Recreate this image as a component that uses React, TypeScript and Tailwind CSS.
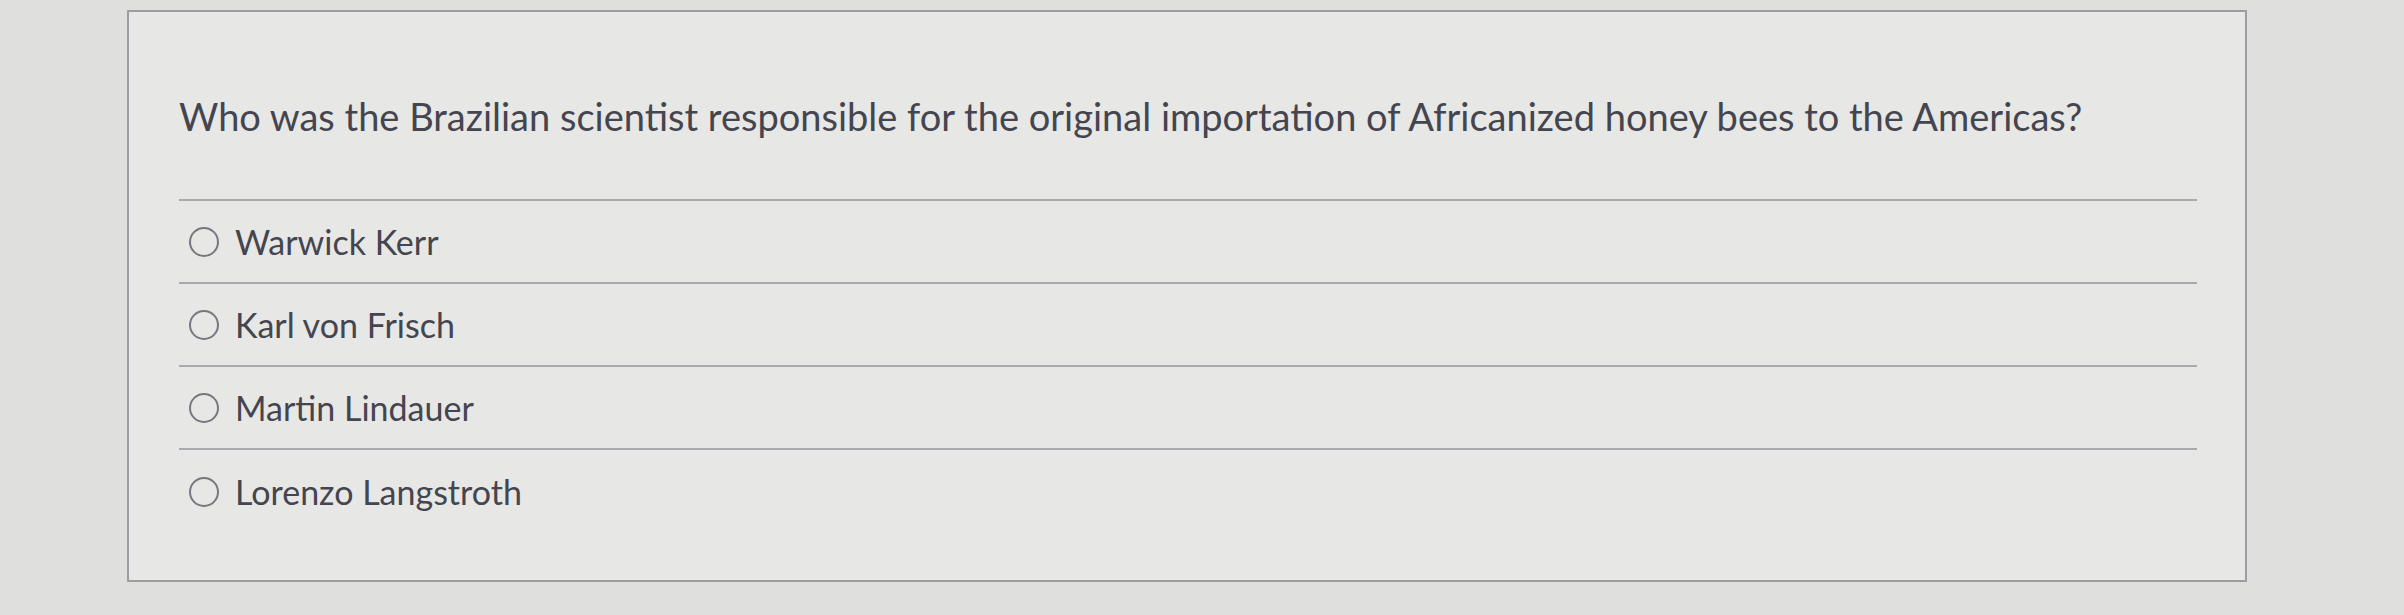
const options = ['Warwick Kerr', 'Karl von Frisch', 'Martin Lindauer', 'Lorenzo Langstroth'];

export default function App() {
  return (
    <div className="h-[615px] w-[2404px] bg-[#dfdfdd] pl-[127px] pt-[10px] font-['Lato',sans-serif] text-[#44454f]">
      <div className="h-[572px] w-[2120px] border-2 border-[#9c9ca2] bg-[#e7e7e5] pl-[50px] pr-[48px] pt-[81px]">
        <p className="text-[38px] leading-[46px]">
          Who was the Brazilian scientist responsible for the original importation of Africanized honey bees to the
          Americas?
        </p>
        <div className="mt-[60px] border-t-2 border-[#a9a9ae]">
          {options.map((opt, i) => (
            <label
              key={opt}
              className={
                i < options.length - 1
                  ? 'flex h-[83px] items-center gap-[16px] border-b-2 border-[#a9a9ae] pl-[10px]'
                  : 'flex h-[83px] items-center gap-[16px] pl-[10px]'
              }
            >
              <span className="h-[30px] w-[30px] rounded-full border-2 border-[#77777f]" />
              <span className="text-[34px] leading-none">{opt}</span>
            </label>
          ))}
        </div>
      </div>
    </div>
  );
}
